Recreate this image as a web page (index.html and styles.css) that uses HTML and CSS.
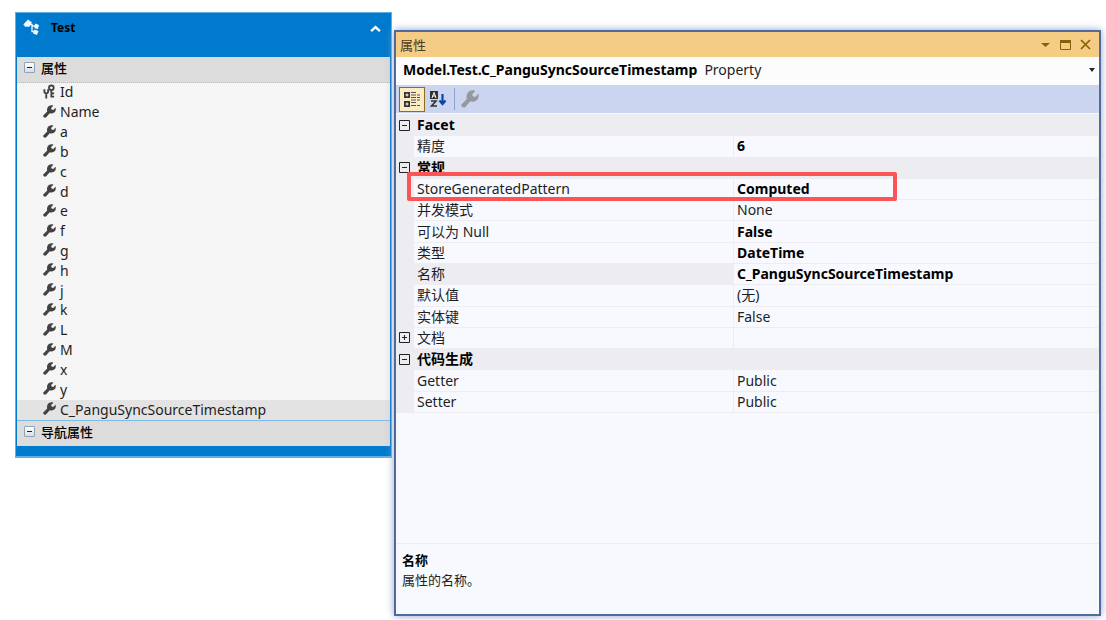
FILE: index.html
```html
<!DOCTYPE html>
<html lang="zh-CN">
<head>
<meta charset="utf-8">
<title>Test</title>
<link rel="stylesheet" href="styles.css">
</head>
<body>
<svg class="defs" aria-hidden="true">
  <symbol id="wrench" viewBox="0 0 16 16"><path d="M.6 12.600 5.200 8C4.200 4.500 5.800 1.200 9 .5c1.400-.3 2.800-.2 3.800.3L10 3.700l.5 1.900 2.100.6L15.500 3.400c.7 2.500-.2 5-2.200 6.200-1.500.9-3.400 1-5 .5L3.900 15.200C2.300 16.600-.9 14.500.6 12.600Z"/></symbol>
  <symbol id="minus" viewBox="0 0 11 11"><path d="M.5.5h10v10H.5ZM3 5.500h5" fill="none" stroke="#222"/></symbol>
  <symbol id="plus" viewBox="0 0 11 11"><path d="M.5.5h10v10H.5ZM3 5.500h5M5.500 3v5" fill="none" stroke="#222"/></symbol>
</svg>
<main class="desk">
  <section class="entity">
    <header class="entity-head">
      <svg class="entity-icon" viewBox="0 0 17 17"><path d="M5 .5 9 3.500 6 8 3.500 7.500 2.500 8 .3 5.500ZM12 4.500l4 1.500-1.200 4-3.300-.8ZM11.500 10.500l4 1.500-1.500 4-4-1.500Z" fill="#f2f8fd"/><path d="M6 5.500h3v7H12M9 7h3" fill="none" stroke="#f2f8fd" stroke-width="1.300"/></svg>
      <h1 class="entity-name">Test</h1>
      <button class="collapse" aria-label="折叠"><svg viewBox="0 0 10 7"><path d="M1 5.500 5 1.800 9 5.500" fill="none" stroke="#fff" stroke-width="2.200"/></svg></button>
    </header>
    <h2 class="group"><button class="fold" aria-label="折叠属性"></button>属性</h2>
    <ul class="fields">
      <li><svg class="key" viewBox="0 0 14 15"><path d="M1.500 5v2.500q0 2 2 2t2-2V5M3.500 9.500V15M9 6v8M9 9.500h3M9 13h3" fill="none" stroke="#424242" stroke-width="2"/><circle cx="9" cy="3.500" r="2.500" fill="none" stroke="#424242" stroke-width="2"/></svg>Id</li>
      <li><svg><use href="#wrench"/></svg>Name</li>
      <li><svg><use href="#wrench"/></svg>a</li>
      <li><svg><use href="#wrench"/></svg>b</li>
      <li><svg><use href="#wrench"/></svg>c</li>
      <li><svg><use href="#wrench"/></svg>d</li>
      <li><svg><use href="#wrench"/></svg>e</li>
      <li><svg><use href="#wrench"/></svg>f</li>
      <li><svg><use href="#wrench"/></svg>g</li>
      <li><svg><use href="#wrench"/></svg>h</li>
      <li><svg><use href="#wrench"/></svg>j</li>
      <li><svg><use href="#wrench"/></svg>k</li>
      <li><svg><use href="#wrench"/></svg>L</li>
      <li><svg><use href="#wrench"/></svg>M</li>
      <li><svg><use href="#wrench"/></svg>x</li>
      <li><svg><use href="#wrench"/></svg>y</li>
      <li class="selected"><svg><use href="#wrench"/></svg>C_PanguSyncSourceTimestamp</li>
    </ul>
    <h2 class="group group-last"><button class="fold" aria-label="折叠导航属性"></button>导航属性</h2>
  </section>

  <section class="panel">
    <header class="panel-head">
      <h2 class="panel-title">属性</h2>
      <button class="win" aria-label="菜单"><svg viewBox="0 0 11 11"><path d="M1 4h9L5.500 8Z" fill="#8a5f0a"/></svg></button>
      <button class="win" aria-label="最大化"><svg viewBox="0 0 11 11"><path d="M.5 1.500h10v9H.5Z" fill="none" stroke="#8a5f0a"/><path d="M0 1h11v3H0Z" fill="#8a5f0a"/></svg></button>
      <button class="win" aria-label="关闭"><svg viewBox="0 0 11 11"><path d="m1 1 9 9M10 1 1 10" stroke="#8a5f0a" stroke-width="1.700"/></svg></button>
    </header>
    <button class="object" aria-haspopup="listbox"><b>Model.Test.C_PanguSyncSourceTimestamp</b><span>Property</span><svg viewBox="0 0 6 4"><path d="M0 0h6L3 4Z" fill="#1b2a44"/></svg></button>
    <div class="tools">
      <button class="tool active" aria-label="按分类排列"><svg viewBox="0 0 18 18"><path d="M1 2h6v6H1ZM1 11h6v6H1Z" fill="#333"/><path d="M2.500 5h3M4 3.500v3M2.500 14h3M4 12.500v3" stroke="#fff"/><path d="M8 2.500h5M8 5h5M8 7.500h5M8 12.500h5M8 15.500h5M14 5h3M14 7.500h3M14 10h3M14 15.500h3M8 10h5" stroke="#555"/></svg></button>
      <button class="tool" aria-label="按字母排序"><svg viewBox="0 0 18 18"><path d="M1 1h8v8H1Z" fill="#333"/><path d="M3 8 5 2.500 7 8M3.500 6h3" fill="none" stroke="#fff"/><path d="M2 11h5L2.500 16H8" fill="none" stroke="#333" stroke-width="1.600"/><path d="M13.500 4v10M10.500 10.500l3 3.500 3-3.500" fill="none" stroke="#0b47a8" stroke-width="2.200"/></svg></button>
      <span class="sep"></span>
      <button class="tool pages" aria-label="属性页" disabled><svg><use href="#wrench"/></svg></button>
    </div>
    <div class="sheet">
      <table class="props">
        <colgroup><col class="c-mark"><col class="c-name"><col></colgroup>
        <tr class="cat"><td><svg><use href="#minus"/></svg></td><th colspan="2">Facet</th></tr>
        <tr><td></td><th>精度</th><td class="set">6</td></tr>
        <tr class="cat"><td><svg><use href="#minus"/></svg></td><th colspan="2">常规</th></tr>
        <tr><td></td><th>StoreGeneratedPattern</th><td class="set">Computed</td></tr>
        <tr><td></td><th>并发模式</th><td>None</td></tr>
        <tr><td></td><th>可以为 Null</th><td class="set">False</td></tr>
        <tr><td></td><th>类型</th><td class="set">DateTime</td></tr>
        <tr class="current"><td></td><th>名称</th><td class="set">C_PanguSyncSourceTimestamp</td></tr>
        <tr><td></td><th>默认值</th><td>(无)</td></tr>
        <tr><td></td><th>实体键</th><td>False</td></tr>
        <tr><td><svg><use href="#plus"/></svg></td><th>文档</th><td></td></tr>
        <tr class="cat"><td><svg><use href="#minus"/></svg></td><th colspan="2">代码生成</th></tr>
        <tr><td></td><th>Getter</th><td>Public</td></tr>
        <tr><td></td><th>Setter</th><td>Public</td></tr>
      </table>
      <div class="highlight"></div>
    </div>
    <footer class="help"><b>名称</b><p>属性的名称。</p></footer>
  </section>
</main>
</body>
</html>
```
FILE: styles.css
```css
* { box-sizing: border-box; }
body {
  margin: 0;
  background: #fff;
  color: #1e1e1e;
  font: 14px/20px "Noto Sans", "Noto Sans CJK SC", sans-serif;
}
h1, h2, p, ul { margin: 0; padding: 0; font-size: inherit; }
ul { list-style: none; }
button { border: 0; padding: 0; background: none; font: inherit; color: inherit; }
svg { display: block; flex: none; }
.defs { position: absolute; width: 0; height: 0; }
.desk {
  display: flex;
  align-items: flex-start;
  gap: 2px;
  padding: 12px 5px 4px 15px;
}

.entity {
  display: flex;
  flex-direction: column;
  flex: 0 0 377px;
  min-height: 446px;
  border: 1px solid #5fb0e6;
  border-bottom-width: 2px;
  padding: 0 1px 10px;
  background: #007acc;
}
.entity-head { display: flex; align-items: flex-start; height: 44px; padding: 5px 9px 0 6px; }
.entity-icon { width: 17px; height: 17px; margin-top: 1px; }
.entity-name { flex: 1; margin-left: 11px; color: #000; font-size: 12px; }
.collapse svg { width: 11px; height: 8px; margin-top: 7px; }
.group {
  display: flex;
  align-items: center;
  gap: 6px;
  height: 26px;
  padding: 0 7px 4px;
  border-bottom: 1px dotted #bbb;
  background: #dcdcdc;
  color: #000;
  font-size: 13px;
  font-weight: 500;
}
.group-last { border-top: 1px solid #7dbbe6; border-bottom: 0; }
.fold {
  width: 11px;
  height: 11px;
  border: 1px solid #8fa3b8;
  border-radius: 1px;
  background: linear-gradient(#222, #222) center / 5px 1px no-repeat, linear-gradient(#fff, #d8dde2);
}
.fields { display: grid; grid-auto-rows: 1fr; flex: 1; background: #f5f5f5; }
.fields li { display: flex; align-items: center; gap: 4px; padding: 0 0 1px 26px; line-height: 18px; }
.fields svg { width: 13px; height: 13px; margin-bottom: 2px; fill: #424242; }
.fields .key { height: 15px; }
.fields .selected { background: #e3e3e3; }

.panel {
  display: flex;
  flex-direction: column;
  flex: 1;
  min-width: 0;
  min-height: 586px;
  margin-top: 18px;
  border: 2px solid #506a9c;
  background: #f7f9fe;
  box-shadow: 0 0 8px #8fa3cc;
}
.panel-head { display: flex; align-items: center; gap: 9px; height: 25px; padding: 0 8px 0 4px; background: #f5cc84; }
.panel-title { flex: 1; font-size: 13px; font-weight: 400; line-height: 18px; color: #4a3d22; }
.win svg { width: 11px; height: 11px; }
.object {
  display: flex;
  align-items: center;
  gap: 7px;
  height: 28px;
  padding: 0 4px 2px 7px;
  background: #fcfcfc;
  text-align: left;
}
.object b { color: #000; }
.object span { flex: 1; }
.object svg { width: 6px; height: 4px; }
.tools { display: flex; align-items: center; height: 28px; padding: 0 3px; background: #ccd5f0; }
.tool { display: grid; place-items: center; width: 26px; height: 25px; }
.tool svg { width: 18px; height: 18px; }
.active { border: 1px solid #8d6c2a; background: #fdebc4; }
.sep { width: 1px; height: 22px; margin: 0 2px 0 3px; background: #8ea2cf; }
.pages svg { fill: #96989f; }
.sheet { position: relative; flex: 1; padding-top: 1px; }
.props { width: 100%; height: 299px; border-collapse: collapse; table-layout: fixed; }
.c-mark { width: 17px; }
.c-name { width: 320px; }
.props td, .props th {
  padding: 0 3px;
  border: 1px solid #ededf1;
  font-weight: 400;
  line-height: 18px;
  text-align: left;
  white-space: nowrap;
}
.props td:first-child { padding: 0 2px; background: #ededf1; }
.props svg { width: 11px; height: 11px; }
.props .cat th { background: #ededf1; color: #000; font-weight: 700; }
.props .set { color: #000; font-weight: 700; }
.props .current th { background: #ededf1; }
.highlight {
  position: absolute;
  top: 59px;
  left: 11px;
  width: 490px;
  height: 29px;
  border: 4px solid #fb5454;
  border-radius: 2px;
}
.help { min-height: 71px; padding: 6px 6px 0; border-top: 1px solid #ededf1; font-size: 13px; }
.help b { color: #000; }
```
